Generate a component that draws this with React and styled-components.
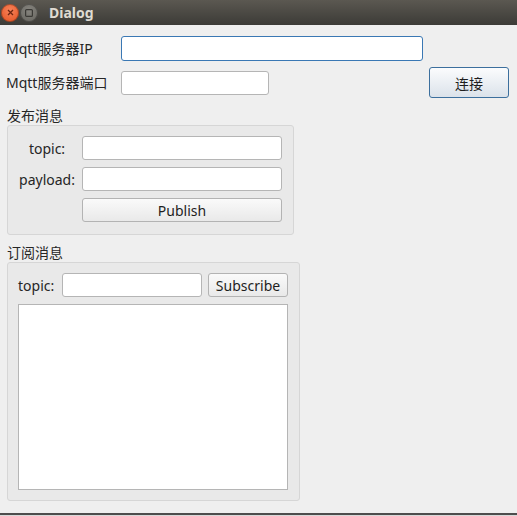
import React from "react";
import styled, { createGlobalStyle } from "styled-components";

const GlobalStyle = createGlobalStyle`
  html, body {
    margin: 0;
    padding: 0;
    background: #efefef;
  }
  body {
    font-family: "Noto Sans", "Noto Sans CJK SC", sans-serif;
    font-size: 14px;
    color: #262626;
  }
`;

const Window = styled.div`
  width: 517px;
  height: 516px;
  display: flex;
  flex-direction: column;
  overflow: hidden;
`;

const TitleBar = styled.div`
  height: 25px;
  flex: none;
  display: flex;
  align-items: center;
  padding-left: 1px;
  background: linear-gradient(#5b5851, #3c3b37);
`;

const WinButton = styled.div`
  width: 18px;
  height: 18px;
  border-radius: 50%;
  margin-right: 1px;
  display: flex;
  align-items: center;
  justify-content: center;
  background: ${({ $close }) =>
    $close
      ? "radial-gradient(circle at 50% 35%, #f78259, #e2501f)"
      : "radial-gradient(circle at 50% 35%, #86847e, #64635d)"};
  box-shadow: inset 0 0 0 1px rgba(0, 0, 0, 0.3);
`;

const Title = styled.span`
  margin-left: 10px;
  font-weight: bold;
  font-size: 14px;
  color: #dfdbd2;
`;

const Body = styled.div`
  flex: 1;
  background: #efefef;
  padding: 11px 0 0 6px;
  display: flex;
  flex-direction: column;
`;

const Row = styled.div`
  display: flex;
  align-items: center;
  margin-top: ${({ $gap }) => $gap || 0}px;
`;

const Label = styled.label`
  width: ${({ $w }) => $w}px;
  flex: none;
  white-space: nowrap;
  line-height: 16px;
`;

const Input = styled.input`
  box-sizing: border-box;
  width: ${({ $w }) => $w}px;
  height: ${({ $h }) => $h || 24}px;
  margin: 0;
  padding: 0 4px;
  background: #ffffff;
  border: 1px solid ${({ $focus }) => ($focus ? "#3a78b4" : "#b5b5b5")};
  border-radius: 3px;
  outline: none;
  font: inherit;
`;

const Button = styled.button`
  box-sizing: border-box;
  width: ${({ $w }) => $w}px;
  height: ${({ $h }) => $h || 24}px;
  margin: 0 0 0 ${({ $ml }) => $ml || 0}px;
  padding: 0;
  border: 1px solid ${({ $primary }) => ($primary ? "#3c6f9d" : "#b3b3b3")};
  border-radius: 3px;
  background: ${({ $primary }) =>
    $primary
      ? "linear-gradient(#fbfcfd, #dbe2ea)"
      : "linear-gradient(#fafafa, #e9e9e9)"};
  font: inherit;
  color: #1e1e1e;
  cursor: pointer;
`;

const GroupTitle = styled.div`
  margin: ${({ $top }) => $top}px 0 1px 1px;
  line-height: 16px;
`;

const GroupBox = styled.div`
  box-sizing: border-box;
  width: ${({ $w }) => $w}px;
  height: ${({ $h }) => $h}px;
  margin-left: 1px;
  background: #e9e9e9;
  border: 1px solid #d6d6d6;
  border-radius: 3px;
`;

const PublishGrid = styled.div`
  display: grid;
  grid-template-columns: 58px 200px;
  column-gap: 6px;
  row-gap: 7px;
  align-items: center;
  padding: 10px 0 0 10px;
`;

const FormLabel = styled.label`
  text-align: center;
  white-space: nowrap;
`;

const SubscribeBody = styled.div`
  padding: 10px 0 0 10px;
  display: flex;
  flex-direction: column;
  gap: 7px;
`;

const SubLabel = styled.label`
  width: 44px;
  flex: none;
`;

const Log = styled.textarea`
  box-sizing: border-box;
  width: 270px;
  height: 186px;
  margin: 0;
  resize: none;
  background: #ffffff;
  border: 1px solid #b5b5b5;
  border-radius: 0;
  outline: none;
  font: inherit;
`;

const Footer = styled.div`
  height: 3px;
  flex: none;
  border-top: 2px solid #4d4d4d;
  background: #d9d9d9;
  box-sizing: border-box;
`;

export default function App() {
  return (
    <>
      <GlobalStyle />
      <Window>
        <TitleBar>
          <WinButton $close>
            <svg width="7" height="7" viewBox="0 0 7 7">
              <path d="M1 1 L6 6 M6 1 L1 6" stroke="#6e2410" strokeWidth="1.3" />
            </svg>
          </WinButton>
          <WinButton>
            <svg width="8" height="8" viewBox="0 0 8 8">
              <rect x="0.6" y="0.6" width="6.8" height="6.8" rx="1" fill="none" stroke="#3b3a36" strokeWidth="1.2" />
            </svg>
          </WinButton>
          <Title>Dialog</Title>
        </TitleBar>
        <Body>
          <Row>
            <Label $w={115}>Mqtt服务器IP</Label>
            <Input $w={302} $h={25} $focus />
          </Row>
          <Row $gap={6}>
            <Label $w={115}>Mqtt服务器端口</Label>
            <Input $w={148} />
            <Button $primary $w={80} $h={31} $ml={160}>
              连接
            </Button>
          </Row>

          <GroupTitle $top={10}>发布消息</GroupTitle>
          <GroupBox $w={287} $h={110}>
            <PublishGrid>
              <FormLabel>topic:</FormLabel>
              <Input $w={200} />
              <FormLabel>payload:</FormLabel>
              <Input $w={200} />
              <span />
              <Button $w={200}>Publish</Button>
            </PublishGrid>
          </GroupBox>

          <GroupTitle $top={10}>订阅消息</GroupTitle>
          <GroupBox $w={293} $h={239}>
            <SubscribeBody>
              <Row>
                <SubLabel>topic:</SubLabel>
                <Input $w={140} />
                <Button $w={80} $ml={6}>
                  Subscribe
                </Button>
              </Row>
              <Log readOnly />
            </SubscribeBody>
          </GroupBox>
        </Body>
        <Footer />
      </Window>
    </>
  );
}
